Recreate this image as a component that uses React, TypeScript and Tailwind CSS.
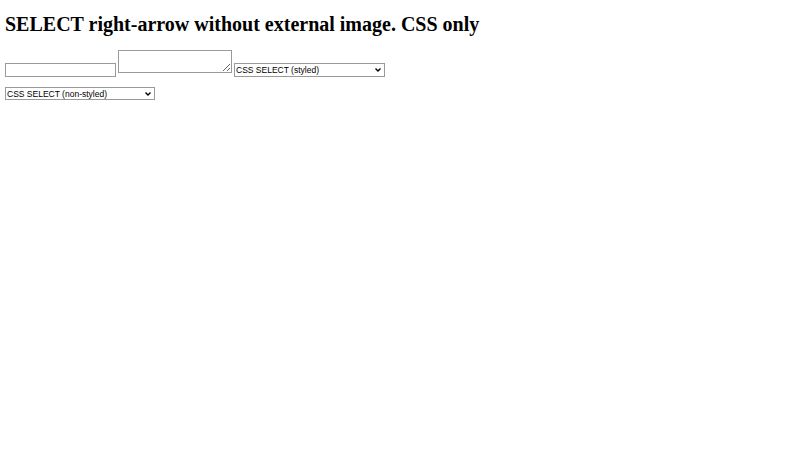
import React from 'react';

function Chevron() {
  return (
    <svg
      className="pointer-events-none absolute right-[4px] top-1/2 -translate-y-1/2"
      width="6"
      height="4"
      viewBox="0 0 6 4"
    >
      <path d="M0.5 0.5 L3 3 L5.5 0.5" fill="none" stroke="#000" strokeWidth="1.4" />
    </svg>
  );
}

function Select({ label, width }: { label: string; width: string }) {
  return (
    <div className={`relative ${width}`}>
      <select className="block h-full w-full appearance-none border border-[#9a9a9a] bg-white pl-[1px] text-[8.5px] leading-[10px] text-black [font-family:'Liberation_Sans',Arial,sans-serif]">
        <option>{label}</option>
      </select>
      <Chevron />
    </div>
  );
}

export default function App() {
  return (
    <div className="min-h-screen bg-white px-[5px] text-black">
      {/* Heading */}
      <h1 className="pt-[13px] text-[20px] leading-[23px] font-bold [font-family:'Liberation_Serif','Times_New_Roman',serif]">
        SELECT right-arrow without external image. CSS only
      </h1>

      {/* First row: input, textarea, styled select */}
      <div className="mt-[14px] flex items-end gap-[2px]">
        <input
          type="text"
          className="h-[14px] w-[111px] border border-[#9a9a9a] bg-white"
        />
        <textarea className="mb-[4px] h-[23px] w-[114px] border border-[#9a9a9a] bg-white" />
        <Select label="CSS SELECT (styled)" width="h-[14px] w-[151px]" />
      </div>

      {/* Second row */}
      <div className="mt-[10px] flex">
        <Select label="CSS SELECT (non-styled)" width="h-[13px] w-[150px]" />
      </div>
    </div>
  );
}
